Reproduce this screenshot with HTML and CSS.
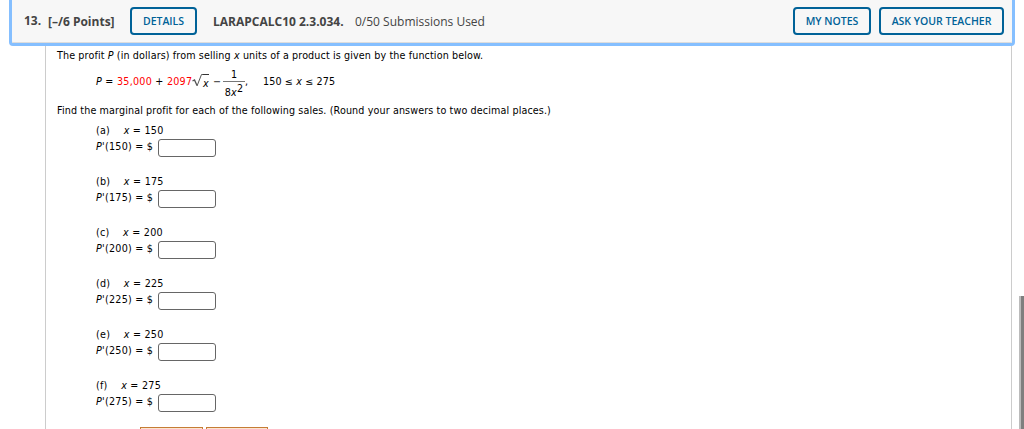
FILE: index.html
```html
<!DOCTYPE html>
<html lang="en">
<head>
    <meta charset="UTF-8">
    <meta name="viewport" content="width=device-width, initial-scale=1.0">
    <title>LARAPCALC10 2.3.034</title>
    <link rel="stylesheet" href="styles.css">
</head>
<body>
    <header class="question-header">
        <span class="number">13.</span>
        <span class="points">[–/6 Points]</span>
        <button type="button" class="btn btn-details">DETAILS</button>
        <span class="question-name">LARAPCALC10 2.3.034.</span>
        <span class="submissions">0/50 Submissions Used</span>
        <div class="header-actions">
            <button type="button" class="btn btn-notes">MY NOTES</button>
            <button type="button" class="btn btn-teacher">ASK YOUR TEACHER</button>
        </div>
    </header>

    <main class="question-body">
        <p class="intro">The profit <i>P</i> (in dollars) from selling <i>x</i> units of a product is given by the function below.</p>

        <!-- Profit function -->
        <div class="formula">
            <span class="formula-left"><i>P</i> = <span class="red">35,000</span> + <span class="red">2097</span></span>
            <svg class="radical" width="11" height="16" viewBox="0 0 11 16">
                <path d="M0.5 8 L2.5 7 L5 12.5" fill="none" stroke="#555" stroke-width="1.3"/>
                <path d="M5 13 L9.5 1.5 H11" fill="none" stroke="#555" stroke-width="1"/>
            </svg>
            <span class="radicand"><i>x</i></span>
            <span class="minus">−</span>
            <span class="fraction">
                <span class="numerator">1</span>
                <span class="denominator">8<i>x</i><sup>2</sup></span>
            </span>
            <span class="comma">,</span>
            <span class="domain">150 ≤ <i>x</i> ≤ 275</span>
        </div>

        <p class="find">Find the marginal profit for each of the following sales. (Round your answers to two decimal places.)</p>

        <!-- Answer parts -->
        <form class="parts">
            <div class="part">
                <div class="given"><span class="letter">(a)</span><i>x</i> = 150</div>
                <label class="answer"><span class="answer-label"><i>P</i>'(150) = $</span><input type="text"></label>
            </div>
            <div class="part">
                <div class="given"><span class="letter">(b)</span><i>x</i> = 175</div>
                <label class="answer"><span class="answer-label"><i>P</i>'(175) = $</span><input type="text"></label>
            </div>
            <div class="part">
                <div class="given"><span class="letter">(c)</span><i>x</i> = 200</div>
                <label class="answer"><span class="answer-label"><i>P</i>'(200) = $</span><input type="text"></label>
            </div>
            <div class="part">
                <div class="given"><span class="letter">(d)</span><i>x</i> = 225</div>
                <label class="answer"><span class="answer-label"><i>P</i>'(225) = $</span><input type="text"></label>
            </div>
            <div class="part">
                <div class="given"><span class="letter">(e)</span><i>x</i> = 250</div>
                <label class="answer"><span class="answer-label"><i>P</i>'(250) = $</span><input type="text"></label>
            </div>
            <div class="part">
                <div class="given"><span class="letter">(f)</span><i>x</i> = 275</div>
                <label class="answer"><span class="answer-label"><i>P</i>'(275) = $</span><input type="text"></label>
            </div>
        </form>

        <div class="help">
            <span class="help-btn"></span>
            <span class="help-btn"></span>
        </div>
    </main>
    <div class="scroll-thumb"></div>
</body>
</html>
```

FILE: styles.css
```css
* {
    box-sizing: border-box;
}
body {
    position: relative;
    margin: 0;
    height: 429px;
    overflow: hidden;
    background: #fff;
    color: #000;
    font-family: Verdana, "DejaVu Sans", sans-serif;
    font-size: 9.6px;
    letter-spacing: 0.12px;
}
p {
    margin: 0;
}
.question-header {
    position: relative;
    display: flex;
    align-items: flex-start;
    width: 1006px;
    height: 46px;
    margin-left: 9px;
    padding: 7px 8px 0 12px;
    background: #f7f7f7;
    border: 3px solid #85bfff;
    border-top: 0;
    border-radius: 0 0 4px 4px;
    box-shadow: inset 0 -1px 0 #ddd;
    color: #444;
    font-family: "Open Sans", sans-serif;
    font-size: 12px;
    letter-spacing: 0;
    line-height: 29px;
    white-space: nowrap;
}
.number {
    width: 24px;
    font-weight: bold;
    line-height: 28px;
}
.points {
    width: 82px;
    font-weight: bold;
}
.question-name {
    width: 142px;
    margin-left: 16px;
    font-weight: bold;
}
.header-actions {
    display: flex;
    gap: 8px;
    margin-left: auto;
}
.btn {
    height: 28px;
    padding: 0;
    background: #f7f7f7;
    border: 2px solid #006298;
    border-radius: 4px;
    color: #006298;
    font-family: "Open Sans", sans-serif;
    font-size: 10.5px;
    font-weight: 600;
    line-height: 24px;
}
.btn-details {
    width: 67px;
}
.btn-notes {
    width: 78px;
}
.btn-teacher {
    width: 125px;
}
.question-body {
    width: 967px;
    height: 383px;
    margin-left: 45px;
    padding: 3px 0 0 11px;
    border: 1px solid #ccc;
    border-width: 0 1px;
    overflow: hidden;
}
.intro, .find {
    height: 13px;
    line-height: 13px;
    white-space: nowrap;
}
.formula {
    display: flex;
    height: 40px;
    margin: 3px 0 0 39px;
    line-height: 13px;
    white-space: nowrap;
}
.formula-left {
    width: 96px;
    padding-top: 10px;
    letter-spacing: 0.25px;
}
.red {
    color: #f00;
}
.radical {
    margin-top: 8px;
}
.radicand {
    width: 6px;
    height: 14px;
    margin-top: 9px;
    padding-top: 2px;
    border-top: 1px solid #333;
}
.minus {
    width: 14px;
    padding: 10px 0 0 4px;
}
.fraction {
    width: 22px;
    padding-top: 3px;
    text-align: center;
}
.numerator {
    display: block;
    height: 14px;
    border-bottom: 1px solid #777;
}
.denominator {
    display: block;
    height: 18px;
    padding-top: 4px;
}
.denominator sup {
    font-size: 9.6px;
    line-height: 0;
    vertical-align: 4px;
}
.comma {
    width: 18px;
    padding-top: 10px;
}
.domain {
    padding-top: 10px;
}
.find {
    margin-top: -1px;
}
.parts {
    margin: 7px 0 0 39px;
    letter-spacing: 0.25px;
}
.part {
    height: 51px;
}
.given {
    height: 13px;
    line-height: 13px;
}
.letter {
    margin-right: 13.5px;
}
.answer {
    display: flex;
    height: 22px;
}
.answer-label {
    width: 62px;
    padding-top: 3px;
    line-height: 13px;
}
.answer input {
    width: 58px;
    height: 18px;
    margin-top: 2px;
    padding: 0 4px;
    background: #fff;
    border: 1px solid #666;
    border-radius: 3px;
}
.help {
    display: flex;
    gap: 3px;
    margin: -3px 0 0 83px;
}
.help-btn {
    width: 63px;
    height: 20px;
    background: #fbe5cf;
    border: 1px solid #c67c35;
}
.help-btn + .help-btn {
    width: 62px;
}
.scroll-thumb {
    position: absolute;
    top: 296px;
    right: 0;
    width: 5px;
    height: 140px;
    background: #7f7f7f;
    border-left: 1px solid #bbb;
    border-left-width: 2px;
}
```
